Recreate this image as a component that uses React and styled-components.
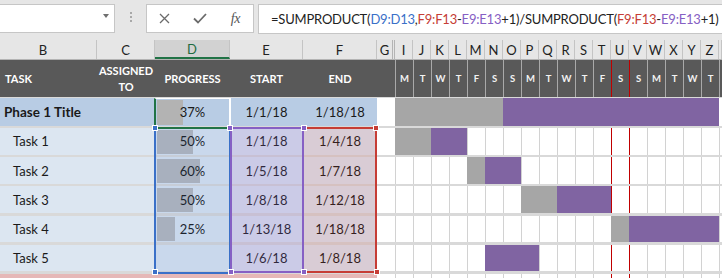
import styled, { createGlobalStyle } from "styled-components";

const GlobalStyle = createGlobalStyle`
  html, body { margin: 0; padding: 0; }
  body {
    width: 722px;
    height: 278px;
    overflow: hidden;
    background: #fff;
    font-family: Lato, "Open Sans", "Liberation Sans", sans-serif;
  }
`;

// sheet columns: B C D E F G, then I..Z (one per day), then the edge of AA
const COLUMNS = "107px 58px 75px 73px 74px 18px repeat(18, 18px) 1fr";
const LETTERS = ["I", "J", "K", "L", "M", "N", "O", "P", "Q", "R", "S", "T", "U", "V", "W", "X", "Y", "Z"];
const DAYS = ["M", "T", "W", "T", "F", "S", "S", "M", "T", "W", "T", "F", "S", "S", "M", "T", "W", "T"];
const TODAY = [12, 13];

const BLUE = "#3a70c8";
const PURPLE = "#8660c4";
const RED = "#c63d36";
const GRID = "#d9d9d9";

const phase = { name: "Phase 1 Title", pct: 37, start: "1/1/18", end: "1/18/18", from: 0, days: 18, done: 6 };
const tasks = [
  { name: "Task 1", pct: 50, start: "1/1/18", end: "1/4/18", from: 0, days: 4, done: 2 },
  { name: "Task 2", pct: 60, start: "1/5/18", end: "1/7/18", from: 4, days: 3, done: 1 },
  { name: "Task 3", pct: 50, start: "1/8/18", end: "1/12/18", from: 7, days: 5, done: 2 },
  { name: "Task 4", pct: 25, start: "1/13/18", end: "1/18/18", from: 12, days: 6, done: 1 },
  { name: "Task 5", pct: null, start: "1/6/18", end: "1/8/18", from: 5, days: 3, done: 0 },
];

/* ---------- formula bar ---------- */

const FormulaBar = styled.div`
  height: 40px;
  background: #e6e6e6;
  display: flex;
  align-items: flex-start;
  padding-top: 4px;
  box-sizing: border-box;
`;

const NameBox = styled.div`
  width: 117px;
  height: 29px;
  margin-left: -2px;
  box-sizing: border-box;
  background: #fff;
  border: 1px solid #c6c6c6;
  display: flex;
  justify-content: flex-end;
  padding: 9px 5px 0 0;
`;

const Caret = styled.div`
  width: 0;
  height: 0;
  border-left: 3.5px solid transparent;
  border-right: 3.5px solid transparent;
  border-top: 4px solid #6f6f6f;
`;

const Grip = styled.div`
  margin-left: 15px;
  padding-top: 8px;
  display: flex;
  flex-direction: column;
  gap: 2px;
`;

const Dot = styled.div`
  width: 2px;
  height: 2px;
  background: #a8a8a8;
`;

const ButtonBox = styled.div`
  margin-left: 14px;
  width: 108px;
  height: 29px;
  box-sizing: border-box;
  background: #fff;
  border: 1px solid #c6c6c6;
  display: grid;
  grid-template-columns: repeat(3, 1fr);
`;

const IconButton = styled.div`
  display: flex;
  align-items: center;
  justify-content: center;
  color: #6b6b6b;
`;

const Fx = styled.span`
  font-family: "Liberation Serif", serif;
  font-style: italic;
  font-size: 14px;
  color: #555;
  letter-spacing: -0.5px;
`;

const FormulaInput = styled.div`
  margin-left: 4px;
  flex: 1;
  height: 30px;
  box-sizing: border-box;
  background: #fff;
  border: 1px solid #c6c6c6;
  border-right: none;
  padding-left: 12px;
  display: flex;
  align-items: center;
  font-size: 13px;
  letter-spacing: -0.2px;
  color: #222;
  white-space: nowrap;
  overflow: hidden;
`;

const Ref = styled.span`
  color: ${(p) => p.$color};
`;

/* ---------- sheet ---------- */

const Sheet = styled.div`
  margin-left: -10px;
  width: 732px;
`;

const LetterRow = styled.div`
  display: grid;
  grid-template-columns: ${COLUMNS};
  height: 20px;
  background: #e6e6e6;
  border-bottom: 1px solid #b4b4b4;
  box-sizing: border-box;
`;

const Letter = styled.div`
  display: flex;
  align-items: center;
  justify-content: center;
  font-size: 13px;
  color: ${(p) => (p.$selected ? "#1e6b41" : "#222")};
  background: ${(p) => (p.$selected ? "#d2d2d2" : "transparent")};
  border-right: ${(p) => (p.$double ? "3px double #b4b4b4" : "1px solid #c4c4c4")};
  border-bottom: ${(p) => (p.$selected ? "2px solid #217346" : "none")};
  box-sizing: border-box;
`;

const HeadRow = styled.div`
  display: grid;
  grid-template-columns: ${COLUMNS};
  height: 37px;
  background: #595959;
  color: #fff;
  font-weight: 700;
`;

const HeadCell = styled.div`
  display: flex;
  align-items: center;
  justify-content: ${(p) => (p.$left ? "flex-start" : "center")};
  padding-left: ${(p) => (p.$left ? "15px" : "0")};
  text-align: center;
  font-size: 11px;
  line-height: 16px;
`;

const DayHead = styled.div`
  display: flex;
  align-items: center;
  justify-content: center;
  font-size: 9.5px;
  color: #f2f2f2;
  border-left: 1px solid ${(p) => (p.$today ? "#c00000" : "#a9a9a9")};
`;

const Body = styled.div`
  position: relative;
  display: flex;
  flex-direction: column;
  gap: 2.5px;
  padding-top: 1px;
  height: 181px;
  box-sizing: border-box;
  background: ${GRID};
  overflow: hidden;
`;

const Row = styled.div`
  display: grid;
  grid-template-columns: ${COLUMNS};
  height: ${(p) => p.$height}px;
  flex-shrink: 0;
  font-size: 13px;
  color: #1a1a1a;
`;

const NameCell = styled.div`
  display: flex;
  align-items: center;
  padding-left: ${(p) => (p.$phase ? "14px" : "23px")};
  font-weight: ${(p) => (p.$phase ? 700 : 400)};
  font-size: ${(p) => (p.$phase ? "13.5px" : "13px")};
  background: ${(p) => p.$bg};
`;

const Fill = styled.div`
  background: ${(p) => p.$bg};
`;

const ProgressCell = styled.div`
  display: grid;
  background: ${(p) => p.$bg};
`;

const Bar = styled.div`
  grid-area: 1 / 1;
  justify-self: start;
  margin: 1.5px 0 1px 1.7px;
  background: ${(p) => p.$bg};
`;

const Pct = styled.div`
  grid-area: 1 / 1;
  place-self: center;
`;

const DateCell = styled.div`
  display: flex;
  align-items: center;
  justify-content: center;
  background: ${(p) => p.$bg};
`;

const Day = styled.div`
  background: ${(p) => p.$bg};
  border-left: ${(p) => (p.$line ? `1px solid ${p.$line}` : "none")};
`;

/* overlays: reference ranges, active cell, corner handles */

const Range = styled.div`
  position: absolute;
  left: ${(p) => p.$left}px;
  top: ${(p) => p.$top}px;
  width: ${(p) => p.$width}px;
  height: ${(p) => p.$height}px;
  box-sizing: border-box;
  border: 2px solid ${(p) => p.$color};
  background: ${(p) => p.$tint};
`;

const ActiveCell = styled.div`
  position: absolute;
  left: 164.3px;
  top: 1px;
  width: 77px;
  height: 30.7px;
  box-sizing: border-box;
  border-left: 2px solid #217346;
  border-bottom: 2px solid #217346;
  border-top: 1.3px solid #fff;
  border-right: 2px solid #fff;
`;

const Handle = styled.div`
  position: absolute;
  left: ${(p) => p.$x + 10 - 3}px;
  top: ${(p) => p.$y - 97 - 3}px;
  width: 6px;
  height: 6px;
  box-sizing: border-box;
  border: 1px solid #fff;
  background: ${(p) => p.$color};
`;

function GanttCells({ item, phaseRow }) {
  return DAYS.map((_, i) => {
    const inBar = i >= item.from && i < item.from + item.days;
    const done = inBar && i < item.from + item.done;
    const bg = done ? "#a6a6a6" : inBar ? "#8064a2" : "#fff";
    let line = null;
    if (!inBar && !phaseRow) line = TODAY.includes(i) ? "#c00000" : "#d2d2d2";
    return <Day key={i} $bg={bg} $line={line} />;
  });
}

function TaskRow({ item, phaseRow }) {
  const base = phaseRow ? "#b8cce4" : "#dce6f1";
  return (
    <Row $height={phaseRow ? 27.5 : 26.7}>
      <NameCell $phase={phaseRow} $bg={base}>{item.name}</NameCell>
      <Fill $bg={base} />
      <ProgressCell $bg={base}>
        {item.pct !== null && (
          <Bar $bg={phaseRow ? "#b3b3b3" : "#b6b9bd"} style={{ width: `${(item.pct / 100) * 72}px` }} />
        )}
        {item.pct !== null && <Pct>{item.pct}%</Pct>}
      </ProgressCell>
      <DateCell $bg={base}>{item.start}</DateCell>
      <DateCell $bg={base}>{item.end}</DateCell>
      <Fill $bg="#fff" />
      <GanttCells item={item} phaseRow={phaseRow} />
      <Day $bg="#fff" $line={phaseRow ? null : "#d2d2d2"} />
    </Row>
  );
}

function NextRow() {
  const pink = "#e6b8b7";
  return (
    <Row $height={26.7}>
      <Fill $bg={pink} />
      <Fill $bg={pink} />
      <Fill $bg={pink} />
      <Fill $bg={pink} />
      <Fill $bg={pink} />
      <Fill $bg="#fff" />
      {DAYS.map((_, i) => (
        <Day key={i} $bg="#fff" $line={TODAY.includes(i) ? "#c00000" : "#d2d2d2"} />
      ))}
      <Day $bg="#fff" $line="#d2d2d2" />
    </Row>
  );
}

export default function App() {
  return (
    <>
      <GlobalStyle />
      <FormulaBar>
        <NameBox>
          <Caret />
        </NameBox>
        <Grip>
          <Dot />
          <Dot />
          <Dot />
        </Grip>
        <ButtonBox>
          <IconButton>
            <svg width="11" height="11" viewBox="0 0 11 11">
              <path d="M1 1 L10 10 M10 1 L1 10" stroke="currentColor" strokeWidth="1.3" fill="none" />
            </svg>
          </IconButton>
          <IconButton>
            <svg width="14" height="11" viewBox="0 0 14 11">
              <path d="M1 5.5 L5 9.5 L13 1" stroke="currentColor" strokeWidth="1.8" fill="none" />
            </svg>
          </IconButton>
          <IconButton>
            <Fx>fx</Fx>
          </IconButton>
        </ButtonBox>
        <FormulaInput>
          =SUMPRODUCT(<Ref $color={BLUE}>D9:D13</Ref>,<Ref $color={RED}>F9:F13</Ref>-
          <Ref $color={PURPLE}>E9:E13</Ref>+1)/SUMPRODUCT(<Ref $color={RED}>F9:F13</Ref>-
          <Ref $color={PURPLE}>E9:E13</Ref>+1)
        </FormulaInput>
      </FormulaBar>

      <Sheet>
        <LetterRow>
          {["B", "C", "D", "E", "F"].map((l) => (
            <Letter key={l} $selected={l === "D"}>
              {l}
            </Letter>
          ))}
          <Letter $double>G</Letter>
          {LETTERS.map((l) => (
            <Letter key={l}>{l}</Letter>
          ))}
          <Letter />
        </LetterRow>

        <HeadRow>
          <HeadCell $left>TASK</HeadCell>
          <HeadCell>
            ASSIGNED
            <br />
            TO
          </HeadCell>
          <HeadCell>PROGRESS</HeadCell>
          <HeadCell>START</HeadCell>
          <HeadCell>END</HeadCell>
          <HeadCell />
          {DAYS.map((d, i) => (
            <DayHead key={i} $today={TODAY.includes(i)}>
              {d}
            </DayHead>
          ))}
          <DayHead />
        </HeadRow>

        <Body>
          <TaskRow item={phase} phaseRow />
          {tasks.map((t) => (
            <TaskRow key={t.name} item={t} />
          ))}
          <NextRow />

          <Range $left={164} $top={30} $width={77} $height={146.5} $color={BLUE} $tint="rgba(58,112,200,0.11)" />
          <Range $left={312} $top={29.7} $width={75.3} $height={146.8} $color={RED} $tint="rgba(198,61,54,0.15)" />
          <Range $left={239.5} $top={29.7} $width={74.5} $height={146.8} $color={PURPLE} $tint="rgba(134,96,196,0.2)" />
          <ActiveCell />
          <Handle $x={155.2} $y={127.5} $color={BLUE} />
          <Handle $x={230.3} $y={127.5} $color={PURPLE} />
          <Handle $x={303.5} $y={127.5} $color={PURPLE} />
          <Handle $x={376.3} $y={127.5} $color={RED} />
          <Handle $x={155.2} $y={272.3} $color={BLUE} />
          <Handle $x={230.5} $y={272.3} $color={PURPLE} />
          <Handle $x={303.5} $y={272.3} $color={PURPLE} />
          <Handle $x={376.7} $y={272.3} $color={RED} />
        </Body>
      </Sheet>
    </>
  );
}
